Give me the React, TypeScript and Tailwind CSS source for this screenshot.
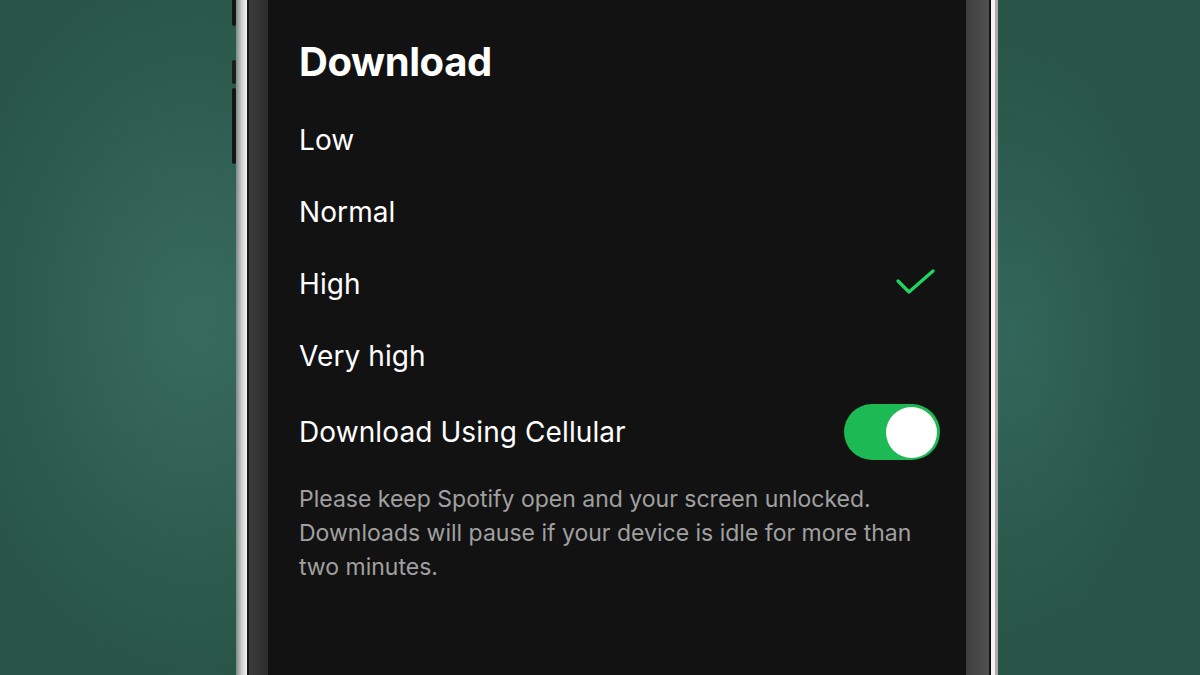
const qualities = ['Low', 'Normal', 'High', 'Very high']

function Check() {
  return (
    <svg width="40" height="31" viewBox="0 0 40 31" fill="none">
      <path d="M2 12 L13 23 L37 2" stroke="#1ed760" strokeWidth="3.2" strokeLinecap="round" strokeLinejoin="round" />
    </svg>
  )
}

function Toggle() {
  return (
    <div className="w-[96px] h-[56px] rounded-full bg-[#1db954] flex items-center justify-end pr-[3px]">
      <div className="w-[51px] h-[51px] rounded-full bg-white" />
    </div>
  )
}

export default function App() {
  const selected = 'High'

  return (
    <div
      className="w-[1200px] h-[675px] overflow-hidden flex bg-[#285548]"
      style={{
        backgroundImage:
          'radial-gradient(ellipse 250px 360px at 195px 320px, #386b5e 0%, rgba(40,85,72,0) 100%), radial-gradient(ellipse 160px 300px at 1010px 340px, #33665a 0%, rgba(40,85,72,0) 100%)',
      }}
    >
      {/* side buttons */}
      <div className="ml-[232px] w-[4px] flex flex-col">
        <div className="h-[26px] bg-[#151515] rounded-b-sm" />
        <div className="h-[34px]" />
        <div className="h-[24px] bg-[#1c1c1c] rounded-sm" />
        <div className="h-[4px]" />
        <div className="h-[76px] bg-[#151515] rounded-sm" />
      </div>

      {/* left rim */}
      <div className="w-[11px] bg-gradient-to-r from-[#7d8a86] via-[#c9cccb] to-[#f4f4f4]" />
      <div className="w-[2px] bg-[#151515]" />
      <div className="w-[19px] bg-gradient-to-r from-[#3c3c3e] to-[#2c2c2e]" />

      {/* screen */}
      <div className="w-[698px] bg-[#121212] pl-[31px] pr-[26px] pt-[38px] text-white" style={{ fontFamily: 'Inter, "Noto Sans", sans-serif' }}>
        <h1 className="text-[40px] font-bold leading-[48px] tracking-[-0.4px]">Download</h1>

        <div className="mt-[18px] flex flex-col">
          {qualities.map(q => (
            <div key={q} className="h-[72px] flex items-center justify-between pr-[4px]">
              <span className="text-[28px] leading-none tracking-[0.1px]">{q}</span>
              {q === selected && <Check />}
            </div>
          ))}
          <div className="h-[80px] flex items-center justify-between">
            <span className="text-[28px] leading-none tracking-[0.1px]">Download Using Cellular</span>
            <Toggle />
          </div>
        </div>

        <p className="mt-[10px] text-[23px] leading-[34px] text-[#a0a0a0] w-[630px]">
          Please keep Spotify open and your screen unlocked. Downloads will pause if your device is idle for more than two minutes.
        </p>
      </div>

      {/* right rim */}
      <div className="w-[23px] bg-gradient-to-r from-[#3e3e3e] to-[#515151]" />
      <div className="w-[2px] bg-[#111]" />
      <div className="w-[4px] bg-[#f6f4f4]" />
      <div className="w-[3px] bg-[#b4a9ab]" />
    </div>
  )
}
